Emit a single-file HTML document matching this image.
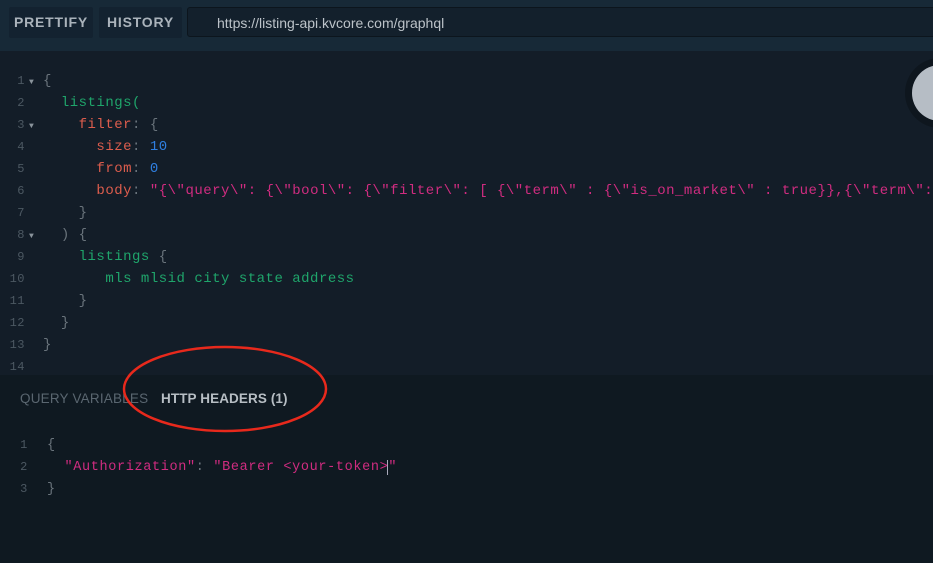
<!DOCTYPE html>
<html><head><style>
body{margin:0;width:933px;height:563px;overflow:hidden;background:#131d28;font-family:"Liberation Sans",sans-serif;position:relative}
.top{position:absolute;left:0;top:0;width:933px;height:51px;background:#172937}
.btn{position:absolute;top:7px;height:31px;background:#132230;border-radius:2px;color:#aab3bb;font-size:14px;font-weight:bold;letter-spacing:.8px;line-height:31px;text-align:center}
.url{position:absolute;left:187px;top:7px;width:760px;height:30px;background:#13202c;border:1px solid #0c151d;border-radius:3px;color:#bcc3c9;font-size:14px;line-height:30px;padding-left:29px;box-sizing:border-box}
.ed{position:absolute;left:0;top:51px;width:933px;height:324px;background:#131d28}
.mono{font-family:"Liberation Mono",monospace;font-size:14px;letter-spacing:0.5px;white-space:pre}
.ln{position:absolute;left:0;width:25px;text-align:right;color:#4c5862;font-size:12px}
.cd{position:absolute;left:43px}
.arr{position:absolute;left:29px;color:#8a949c;font-size:8px}
.p{color:#6a747c}.g{color:#1fa56b}.r{color:#dd5d4d}.b{color:#2f7fe0}.m{color:#d02c80}
.bot{position:absolute;left:0;top:375px;width:933px;height:188px;background:#0f1921}
</style></head><body>
<div class="top">
<div class="btn" style="left:9px;width:84px">PRETTIFY</div>
<div class="btn" style="left:99px;width:83px">HISTORY</div>
<div class="url">https://listing-api.kvcore.com/graphql</div>
</div>
<div class="ed"></div>
<div class="mono">
<div class="ln" style="top:74px">1</div><div class="arr" style="top:78px">▼</div><div class="cd" style="top:73px"><span class="p">{</span></div>
<div class="ln" style="top:96px">2</div><div class="cd" style="top:95px">  <span class="g">listings(</span></div>
<div class="ln" style="top:118px">3</div><div class="arr" style="top:122px">▼</div><div class="cd" style="top:117px">    <span class="r">filter</span><span class="p">: {</span></div>
<div class="ln" style="top:140px">4</div><div class="cd" style="top:139px">      <span class="r">size</span><span class="p">: </span><span class="b">10</span></div>
<div class="ln" style="top:162px">5</div><div class="cd" style="top:161px">      <span class="r">from</span><span class="p">: </span><span class="b">0</span></div>
<div class="ln" style="top:184px">6</div><div class="cd" style="top:183px">      <span class="r">body</span><span class="p">: </span><span class="m">"{\"query\": {\"bool\": {\"filter\": [ {\"term\" : {\"is_on_market\" : true}},{\"term\":</span></div>
<div class="ln" style="top:206px">7</div><div class="cd" style="top:205px">    <span class="p">}</span></div>
<div class="ln" style="top:228px">8</div><div class="arr" style="top:232px">▼</div><div class="cd" style="top:227px">  <span class="p">) {</span></div>
<div class="ln" style="top:250px">9</div><div class="cd" style="top:249px">    <span class="g">listings</span><span class="p"> {</span></div>
<div class="ln" style="top:272px">10</div><div class="cd" style="top:271px">       <span class="g">mls mlsid city state address</span></div>
<div class="ln" style="top:294px">11</div><div class="cd" style="top:293px">    <span class="p">}</span></div>
<div class="ln" style="top:316px">12</div><div class="cd" style="top:315px">  <span class="p">}</span></div>
<div class="ln" style="top:338px">13</div><div class="cd" style="top:337px"><span class="p">}</span></div>
<div class="ln" style="top:360px">14</div>
</div>
<div style="position:absolute;left:905px;top:58px;width:70px;height:70px;border-radius:50%;background:#0e161e"></div>
<div style="position:absolute;left:912px;top:65px;width:56px;height:56px;border-radius:50%;background:#b6bdc5"></div>
<div class="bot"></div>
<div style="position:absolute;left:20px;top:391px;font-size:13.5px;color:#5a6670;letter-spacing:.2px">QUERY VARIABLES</div>
<div style="position:absolute;left:161px;top:391px;font-size:13.5px;color:#b7bec4;font-weight:bold;letter-spacing:.1px">HTTP HEADERS (1)</div>
<div class="mono" style="font-size:13.5px;letter-spacing:0.65px">
<div class="ln" style="top:438px;width:28px">1</div><div class="cd" style="top:438px;left:47px"><span class="p">{</span></div>
<div class="ln" style="top:460px;width:28px">2</div><div class="cd" style="top:460px;left:47px">  <span class="m">"Authorization"</span><span class="p">: </span><span class="m">"Bearer &lt;your-token&gt;</span><span class="m" style="border-left:1px solid #aab;margin-left:-1px">"</span></div>
<div class="ln" style="top:482px;width:28px">3</div><div class="cd" style="top:482px;left:47px"><span class="p">}</span></div>
</div>
<svg style="position:absolute;left:0;top:0" width="933" height="563"><ellipse cx="225" cy="389" rx="101" ry="42" fill="none" stroke="#e8291c" stroke-width="2.5"/></svg>
</body></html>
